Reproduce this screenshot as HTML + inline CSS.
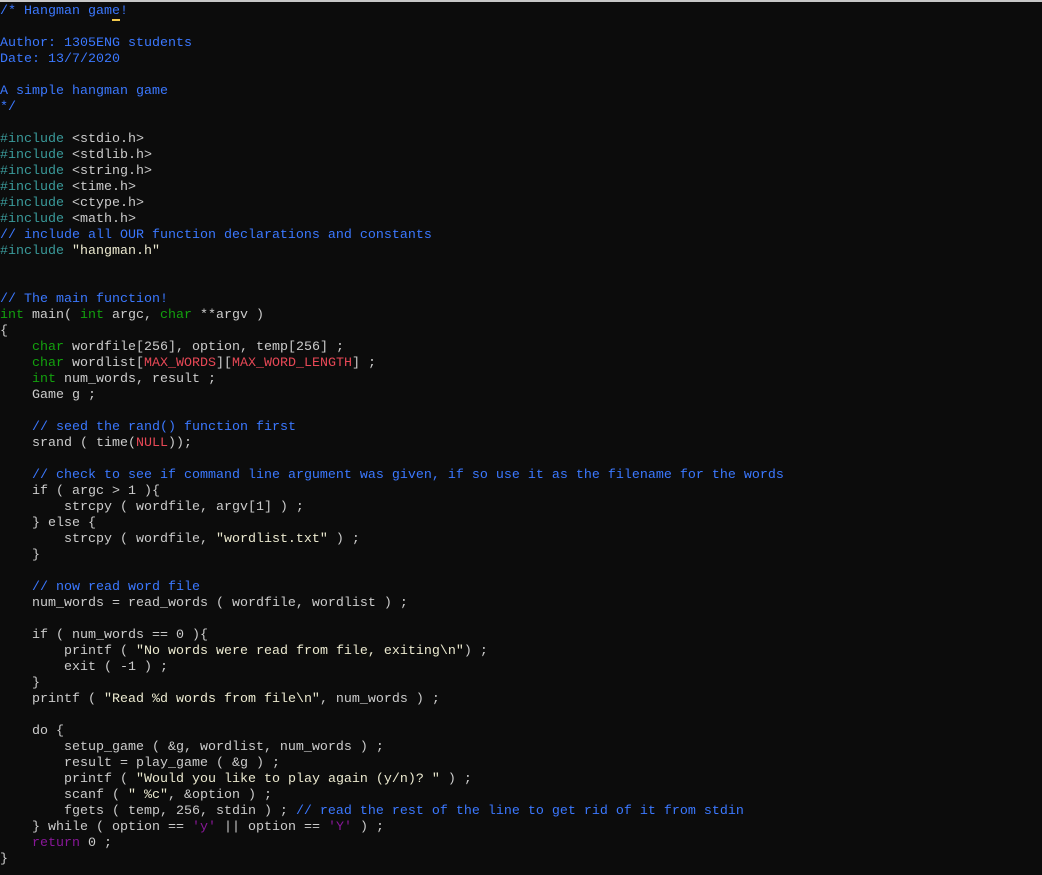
<!DOCTYPE html>
<html><head><meta charset="utf-8"><style>
html,body{margin:0;padding:0;background:#0c0c0c;width:1042px;height:875px;overflow:hidden}
.bar{position:absolute;top:0;left:0;width:1042px;height:2px;background:#c8c8c8}
pre{position:absolute;top:4px;left:0;margin:0;font-family:"Liberation Mono",monospace;font-size:13.33px;line-height:16px;color:#cccccc;white-space:pre}
.c{color:#3b78ff}.g{color:#13a10e}.r{color:#e74856}.i{color:#3a9a9a}.s{color:#ecead0}.m{color:#881798}
.cur{border-bottom:2px solid #f2c94c}
</style></head><body><div class="bar"></div><pre><span class="c">/* Hangman gam<span class="cur">e</span>!

Author: 1305ENG students
Date: 13/7/2020

A simple hangman game
*/</span>

<span class="i">#include</span> &lt;stdio.h&gt;
<span class="i">#include</span> &lt;stdlib.h&gt;
<span class="i">#include</span> &lt;string.h&gt;
<span class="i">#include</span> &lt;time.h&gt;
<span class="i">#include</span> &lt;ctype.h&gt;
<span class="i">#include</span> &lt;math.h&gt;
<span class="c">// include all OUR function declarations and constants</span>
<span class="i">#include</span> <span class="s">"hangman.h"</span>


<span class="c">// The main function!</span>
<span class="g">int</span> main( <span class="g">int</span> argc, <span class="g">char</span> **argv )
{
    <span class="g">char</span> wordfile[256], option, temp[256] ;
    <span class="g">char</span> wordlist[<span class="r">MAX_WORDS</span>][<span class="r">MAX_WORD_LENGTH</span>] ;
    <span class="g">int</span> num_words, result ;
    Game g ;

    <span class="c">// seed the rand() function first</span>
    srand ( time(<span class="r">NULL</span>));

    <span class="c">// check to see if command line argument was given, if so use it as the filename for the words</span>
    if ( argc &gt; 1 ){
        strcpy ( wordfile, argv[1] ) ;
    } else {
        strcpy ( wordfile, <span class="s">"wordlist.txt"</span> ) ;
    }

    <span class="c">// now read word file</span>
    num_words = read_words ( wordfile, wordlist ) ;

    if ( num_words == 0 ){
        printf ( <span class="s">"No words were read from file, exiting\n"</span>) ;
        exit ( -1 ) ;
    }
    printf ( <span class="s">"Read %d words from file\n"</span>, num_words ) ;

    do {
        setup_game ( &amp;g, wordlist, num_words ) ;
        result = play_game ( &amp;g ) ;
        printf ( <span class="s">"Would you like to play again (y/n)? "</span> ) ;
        scanf ( <span class="s">" %c"</span>, &amp;option ) ;
        fgets ( temp, 256, stdin ) ; <span class="c">// read the rest of the line to get rid of it from stdin</span>
    } while ( option == <span class="m">'y'</span> || option == <span class="m">'Y'</span> ) ;
    <span class="m">return</span> 0 ;
}</pre></body></html>
